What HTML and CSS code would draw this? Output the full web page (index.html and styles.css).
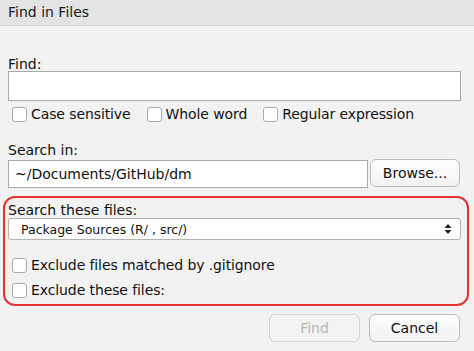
FILE: index.html
```html
<!doctype html>
<html lang="en">
<head>
    <meta charset="UTF-8">
    <title>Find in Files</title>
    <link rel="stylesheet" href="styles.css">
</head>
<body>
    <div class="titlebar">Find in Files</div>
    <div class="dialog">
        <label class="field-label find-label">Find:</label>
        <input type="text" class="text-input find-input">
        <div class="options">
            <label class="check"><span class="box"></span>Case sensitive</label>
            <label class="check"><span class="box"></span>Whole word</label>
            <label class="check"><span class="box"></span>Regular expression</label>
        </div>

        <label class="field-label search-label">Search in:</label>
        <div class="search-row">
            <div class="text-input dir-input">~/Documents/GitHub/dm</div>
            <button class="btn browse-btn">Browse...</button>
        </div>

        <div class="highlight">
            <label class="field-label">Search these files:</label>
            <div class="select">
                <span>Package Sources (R/ , src/)</span>
                <svg class="arrows" width="8" height="12" viewBox="0 0 8 12">
                    <path d="M4 1 L7.5 5 L0.5 5 Z M4 11 L7.5 7 L0.5 7 Z" fill="#222"/>
                </svg>
            </div>
            <label class="check gitignore"><span class="box"></span>Exclude files matched by .gitignore</label>
            <label class="check exclude"><span class="box"></span>Exclude these files:</label>
        </div>

        <div class="actions">
            <button class="btn find-btn" disabled>Find</button>
            <button class="btn cancel-btn">Cancel</button>
        </div>
    </div>
</body>
</html>
```

FILE: styles.css
```css
body {
    margin: 0;
    background: #f2f2f2;
    font-family: "DejaVu Sans", sans-serif;
    font-size: 14px;
    color: #111;
}
.titlebar {
    height: 25px;
    line-height: 25px;
    padding-left: 8px;
    background: #e2e3e5;
    border-bottom: 1px solid #d6d6d6;
    font-size: 14px;
    color: #1a1a1a;
}
.dialog {
    padding: 0 13px 0 8px;
}
.field-label {
    display: block;
    line-height: 17px;
}
.find-label {
    margin-top: 30px;
    margin-bottom: -2px;
}
.text-input {
    box-sizing: border-box;
    display: block;
    width: 100%;
    background: #fff;
    border: 1px solid #a9a9a9;
    font: inherit;
    margin: 0;
}
.find-input {
    height: 30px;
}
.options {
    display: flex;
    gap: 16px;
    margin-top: 5px;
    padding-left: 4px;
}
.check {
    display: flex;
    align-items: center;
    line-height: 17px;
    letter-spacing: -0.1px;
}
.box {
    box-sizing: border-box;
    width: 15px;
    height: 15px;
    margin-right: 4px;
    background: #fff;
    border: 1px solid #ababab;
    border-radius: 3px;
}
.search-label {
    margin-top: 19px;
}
.search-row {
    display: flex;
    align-items: flex-start;
    gap: 2px;
}
.dir-input {
    width: 360px;
    height: 28px;
    margin-top: 1px;
    line-height: 26px;
    padding-left: 6px;
}
.btn {
    box-sizing: border-box;
    height: 28px;
    width: 90px;
    font: inherit;
    color: #111;
    background: linear-gradient(#fdfdfd, #f1f1f1);
    border: 1px solid #bdbdbd;
    border-radius: 6px;
    padding: 0;
}
.highlight {
    margin: 8px -8px 0 -5px;
    padding: 4px 6px 5px 3px;
    border: 2px solid #e2332d;
    border-radius: 12px;
}
.select {
    box-sizing: border-box;
    height: 22px;
    margin-top: -1px;
    display: flex;
    align-items: center;
    justify-content: space-between;
    padding: 0 8px 0 12px;
    background: #fff;
    border: 1px solid #b3b3b3;
    border-radius: 3px;
    font-size: 12.5px;
}
.gitignore {
    margin-top: 17px;
    padding-left: 4px;
}
.exclude {
    margin-top: 8px;
    padding-left: 4px;
}
.actions {
    display: flex;
    justify-content: flex-end;
    gap: 9px;
    margin-top: 8px;
    padding-right: 1px;
}
.actions .btn {
    height: 28px;
    width: 91px;
}
.find-btn {
    color: #b3b3b3;
    border-color: #d3d3d3;
    background: #f3f3f3;
}
```
